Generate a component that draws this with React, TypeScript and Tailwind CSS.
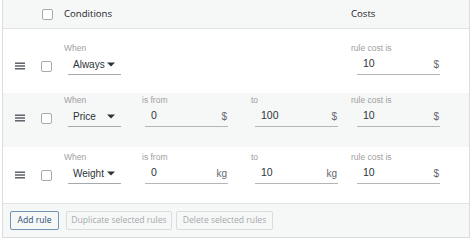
const sans = "font-['Open_Sans','Liberation_Sans',sans-serif]"
const arial = "font-['Liberation_Sans',Arial,sans-serif]"

function Handle() {
  return (
    <svg width="10" height="8" viewBox="0 0 10 8" aria-hidden="true">
      <rect x="0" y="0.5" width="10" height="1.4" fill="#50575e" />
      <rect x="0" y="3.3" width="10" height="1.4" fill="#50575e" />
      <rect x="0" y="6.1" width="10" height="1.4" fill="#50575e" />
    </svg>
  )
}

function Box() {
  return <span className="block h-[11px] w-[11px] rounded-[2px] border border-[#a7aaad] bg-white" />
}

function Label({ text }: { text: string }) {
  return <div className={`h-[11px] text-[8.5px] leading-[10px] text-[#a0a0a0] ${arial}`}>{text}</div>
}

function Select({ label, value }: { label: string; value: string }) {
  return (
    <div className="w-[78px] shrink-0">
      <Label text={label} />
      <div className={`ml-[4px] flex h-[21px] w-[53px] items-center justify-between border-b border-[#a7aaad] pl-[5px] pr-[6px] text-[10px] text-[#2c3338] ${arial}`}>
        <span>{value}</span>
        <svg width="8" height="5" viewBox="0 0 8 5" aria-hidden="true">
          <path d="M0 0.5h8L4 4.5z" fill="#2c3338" />
        </svg>
      </div>
    </div>
  )
}

function Field({ label, value, unit, w, ml }: { label: string; value: string; unit: string; w: string; ml: string }) {
  return (
    <div className={`${w} shrink-0`}>
      <Label text={label} />
      <div className={`${ml} flex h-[21px] w-[83px] items-center justify-between border-b border-[#b4b6b8] pl-[6px] pr-[1px] ${arial}`}>
        <span className="text-[10.5px] text-[#2c3338]">{value}</span>
        <span className="text-[10px] text-[#646970]">{unit}</span>
      </div>
    </div>
  )
}

function Lead() {
  return (
    <>
      <div className="w-[34px] shrink-0">
        <div className="h-[11px]" />
        <div className="flex h-[21px] items-center justify-center pt-[3px]"><Handle /></div>
      </div>
      <div className="w-[27px] shrink-0">
        <div className="h-[11px]" />
        <div className="flex h-[21px] items-center pl-[4px] pt-[3px]"><Box /></div>
      </div>
    </>
  )
}

export default function App() {
  return (
    <div className="h-[240px] w-[474px] bg-white">
      <div className="ml-[2px] w-[468px] border-x border-b border-[#dcdcde]">
        <div className={`flex h-[29px] items-center border-b border-[#e2e4e7] bg-[#f6f7f7] text-[9.6px] text-[#1d2327] ${sans}`}>
          <div className="w-[34px]" />
          <div className="w-[27px] pl-[5px]"><Box /></div>
          <div className="w-[287px]">Conditions</div>
          <div>Costs</div>
        </div>

        <div className="flex h-[64px] pt-[14px]">
          <Lead />
          <Select label="When" value="Always" />
          <div className="w-[209px] shrink-0" />
          <Field label="rule cost is" value="10" unit="$" w="w-[100px]" ml="ml-[6px]" />
        </div>

        <div className="flex h-[54px] bg-[#f6f7f7] pt-[2px]">
          <Lead />
          <Select label="When" value="Price" />
          <Field label="is from" value="0" unit="$" w="w-[109px]" ml="ml-[3px]" />
          <Field label="to" value="100" unit="$" w="w-[100px]" ml="ml-[4px]" />
          <Field label="rule cost is" value="10" unit="$" w="w-[100px]" ml="ml-[6px]" />
        </div>

        <div className="flex h-[56px] pt-[5px]">
          <Lead />
          <Select label="When" value="Weight" />
          <Field label="is from" value="0" unit="kg" w="w-[109px]" ml="ml-[3px]" />
          <Field label="to" value="10" unit="kg" w="w-[100px]" ml="ml-[4px]" />
          <Field label="rule cost is" value="10" unit="$" w="w-[100px]" ml="ml-[6px]" />
        </div>

        <div className={`flex h-[34px] items-start gap-[4px] border-t border-[#e2e4e7] bg-[#f6f7f7] pl-[7px] pt-[7px] text-[8.6px] ${sans}`}>
          <button className="mr-[3px] h-[19px] w-[49px] rounded-[2px] border border-[#7393b3] bg-[#f6f7f7] text-[#2a4f74]">Add rule</button>
          <button className="h-[19px] w-[106px] rounded-[2px] border border-[#dcdcde] bg-[#f6f7f7] text-[#a7aaad]">Duplicate selected rules</button>
          <button className="h-[19px] w-[97px] rounded-[2px] border border-[#dcdcde] bg-[#f6f7f7] text-[#a7aaad]">Delete selected rules</button>
        </div>
      </div>
    </div>
  )
}
